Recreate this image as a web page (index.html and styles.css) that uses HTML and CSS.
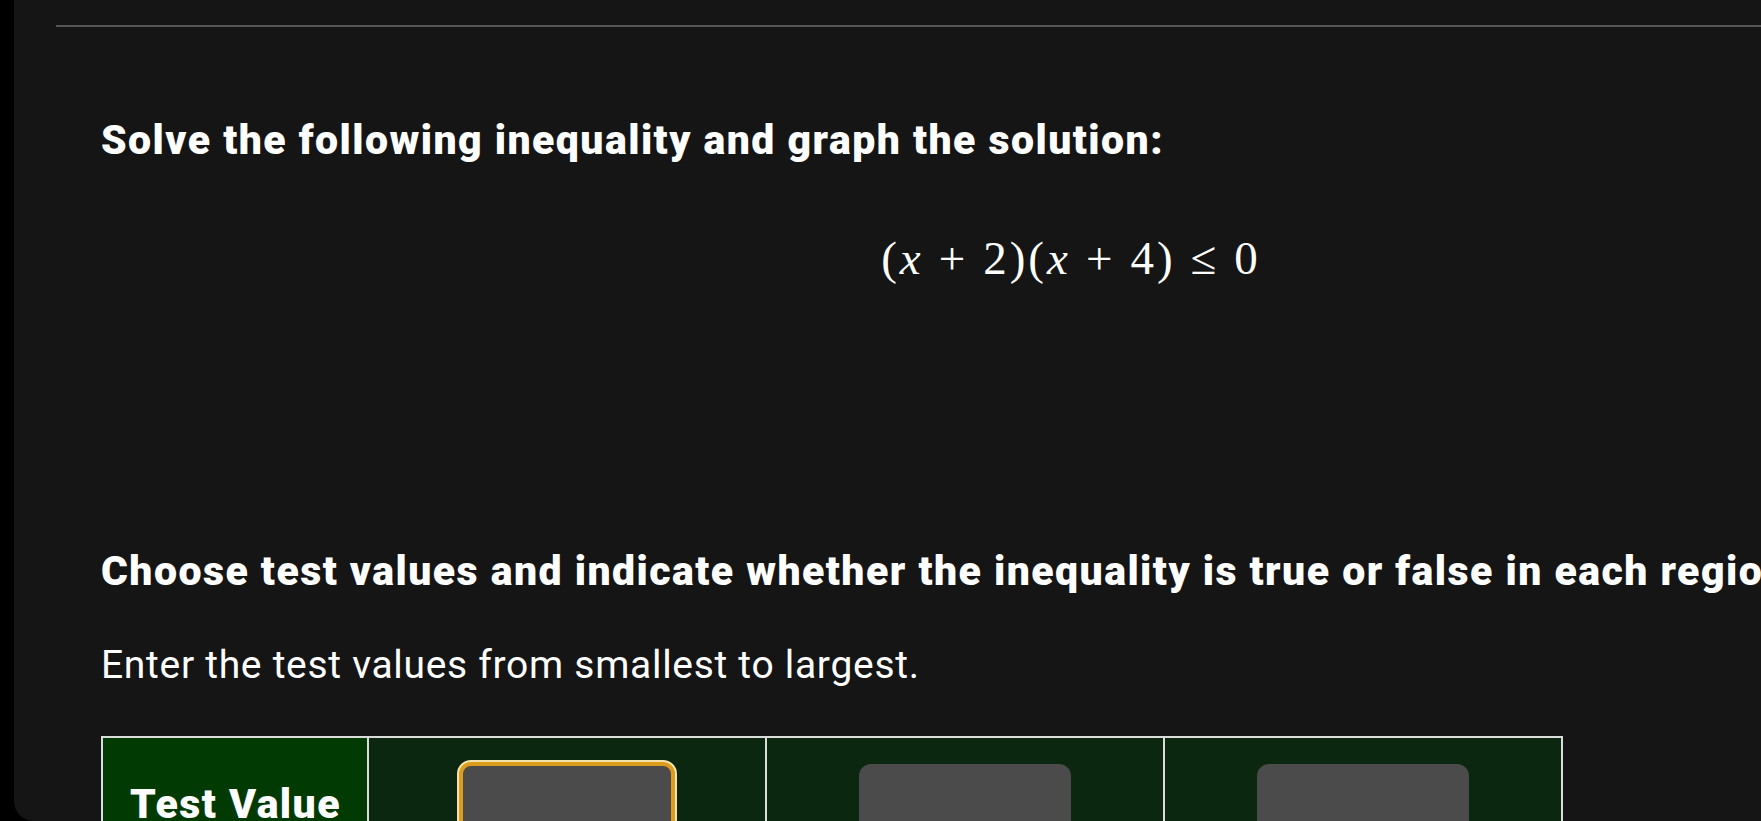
FILE: index.html
```
<!DOCTYPE html>
<html lang="en">
<head>
<meta charset="utf-8">
<title>Inequality</title>
<link rel="stylesheet" href="styles.css">
</head>
<body>
<div class="panel">
  <div class="rule"></div>
  <div class="content">
    <h1 class="title">Solve the following inequality and graph the solution:</h1>
    <div class="equation"><span class="paren">(</span><i>x</i><span class="op">+</span>2<span class="paren">)</span><span class="paren">(</span><i>x</i><span class="op">+</span>4<span class="paren">)</span><span class="op rel">&le;</span>0</div>
    <h2 class="subtitle">Choose test values and indicate whether the inequality is true or false in each region.</h2>
    <p class="hint">Enter the test values from smallest to largest.</p>
    <table class="grid">
      <tr>
        <th class="label">Test Value</th>
        <td class="cell"><div class="box focused"></div></td>
        <td class="cell"><div class="box"></div></td>
        <td class="cell"><div class="box"></div></td>
      </tr>
    </table>
  </div>
</div>
</body>
</html>
```
FILE: styles.css
```
html, body {
  margin: 0;
  padding: 0;
  background: #000;
  overflow: hidden;
}
body {
  font-family: Roboto, "Liberation Sans", sans-serif;
  color: #fff;
}
.panel {
  margin-left: 14px;
  height: 821px;
  background: #151515;
  border-bottom-left-radius: 20px;
  overflow: hidden;
  padding-top: 25px;
  box-sizing: border-box;
}
.rule {
  margin-left: 42px;
  border-top: 2px solid #555;
}
.content {
  padding-left: 87px;
  width: 1940px;
}
.title {
  margin: 89px 0 0 0;
  font-size: 41px;
  line-height: 48px;
  font-weight: 900;
  letter-spacing: 1.45px;
  white-space: nowrap;
}
.equation {
  margin-top: 66px;
  text-align: center;
  font-family: "Liberation Serif", "DejaVu Serif", serif;
  font-size: 47px;
  line-height: 56px;
  letter-spacing: 3px;
  white-space: nowrap;
}
.equation i {
  font-style: italic;
}
.equation .op {
  margin: 0 15px;
}
.subtitle {
  margin: 261px 0 0 0;
  font-size: 41px;
  line-height: 48px;
  font-weight: 900;
  letter-spacing: 1.45px;
  white-space: nowrap;
}
.hint {
  margin: 47px 0 0 0;
  font-size: 39px;
  line-height: 46px;
  font-weight: 400;
  letter-spacing: 0.7px;
  white-space: nowrap;
}
.grid {
  margin-top: 48px;
  border-collapse: collapse;
  border: 2px solid #d9dcd8;
}
.grid th, .grid td {
  border: 2px solid #d9dcd8;
  padding: 0;
  height: 140px;
  vertical-align: top;
}
.label {
  width: 237px;
  background: #013a02;
  text-align: left;
  padding: 42px 0 0 27px !important;
  font-size: 41px;
  line-height: 48px;
  font-weight: 900;
  letter-spacing: 1.45px;
}
.cell {
  width: 396px;
  background: #0c2710;
}
.box {
  width: 212px;
  height: 100px;
  margin: 26px auto 0 auto;
  background: #4b4b4b;
  border-radius: 12px;
  box-sizing: border-box;
}
.box.focused {
  border: 4px solid #dc9c1c;
  box-shadow: 0 0 0 2px #f3e2ac;
  width: 216px;
  margin-top: 24px;
}
```
